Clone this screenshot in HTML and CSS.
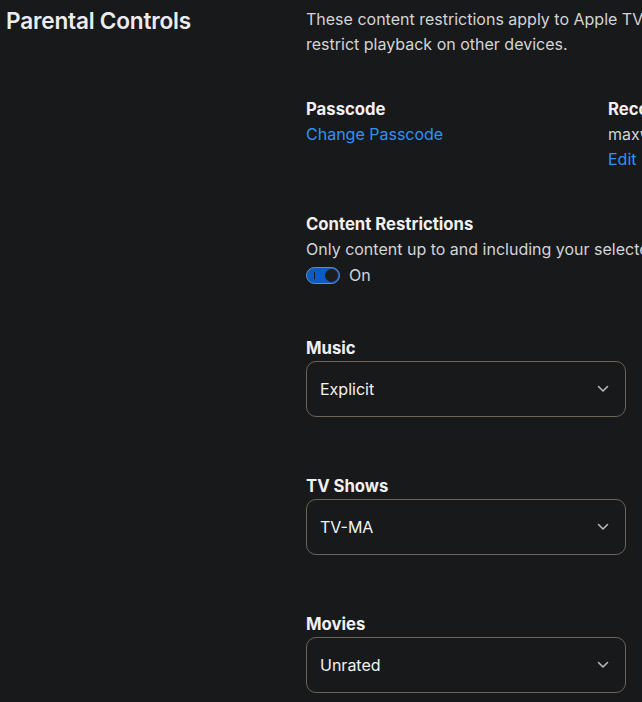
FILE: index.html
```html
<!DOCTYPE html>
<html lang="en">
<head>
<meta charset="utf-8">
<title>Parental Controls</title>
<link rel="stylesheet" href="styles.css">
</head>
<body>
<div class="page">
  <aside class="side">
    <h1 class="title">Parental Controls</h1>
  </aside>
  <main class="main">
    <p class="desc">These content restrictions apply to Apple TV app on this device. Use Screen Time to<br>restrict playback on other devices.</p>

    <div class="info-row">
      <div class="info-col passcode">
        <div class="label">Passcode</div>
        <a class="link" href="#">Change Passcode</a>
      </div>
      <div class="info-col">
        <div class="label">Recovery Email</div>
        <div class="text">maxwell@example.com</div>
        <a class="link" href="#">Edit</a>
      </div>
    </div>

    <div class="restrictions">
      <div class="label">Content Restrictions</div>
      <div class="text">Only content up to and including your selected ratings will be allowed.</div>
      <div class="toggle-row">
        <span class="toggle"><span class="toggle-mark"></span><span class="toggle-knob"></span></span>
        <span class="text">On</span>
      </div>
    </div>

    <div class="field first">
      <div class="label">Music</div>
      <div class="select"><span>Explicit</span><svg class="chev" viewBox="0 0 12 8" width="12" height="8"><path d="M1.5 1.5 L6 6 L10.5 1.5" fill="none" stroke="#b8b8b8" stroke-width="1.6" stroke-linecap="round" stroke-linejoin="round"/></svg></div>
    </div>
    <div class="field">
      <div class="label">TV Shows</div>
      <div class="select"><span>TV-MA</span><svg class="chev" viewBox="0 0 12 8" width="12" height="8"><path d="M1.5 1.5 L6 6 L10.5 1.5" fill="none" stroke="#b8b8b8" stroke-width="1.6" stroke-linecap="round" stroke-linejoin="round"/></svg></div>
    </div>
    <div class="field">
      <div class="label">Movies</div>
      <div class="select"><span>Unrated</span><svg class="chev" viewBox="0 0 12 8" width="12" height="8"><path d="M1.5 1.5 L6 6 L10.5 1.5" fill="none" stroke="#b8b8b8" stroke-width="1.6" stroke-linecap="round" stroke-linejoin="round"/></svg></div>
    </div>
  </main>
</div>
</body>
</html>
```
FILE: styles.css
```css
html, body {
  margin: 0;
  padding: 0;
  background: #18191b;
  overflow: hidden;
}
body {
  font-family: Inter, "Noto Sans", sans-serif;
  font-size: 16px;
  line-height: 25px;
  color: #d4d4d6;
  width: 642px;
  height: 702px;
}
.page {
  display: grid;
  grid-template-columns: 300px 700px;
  padding-left: 6px;
}
.title {
  margin: 6px 0 0 0;
  font-size: 22.6px;
  line-height: 30px;
  font-weight: 600;
  color: #ececee;
  letter-spacing: -0.2px;
}
.main {
  padding-top: 7px;
}
.desc {
  margin: 0;
  white-space: nowrap;
}
.info-row {
  display: flex;
  margin-top: 40px;
}
.info-col.passcode {
  width: 302px;
}
.info-col {
  display: flex;
  flex-direction: column;
  white-space: nowrap;
}
.label {
  font-weight: 700;
  font-size: 16.7px;
  color: #f0f0f2;
  white-space: nowrap;
}
.text {
  white-space: nowrap;
}
.link {
  color: #2e93f5;
  text-decoration: none;
  white-space: nowrap;
}
.restrictions {
  margin-top: 40px;
}
.toggle-row {
  display: flex;
  align-items: center;
  gap: 9px;
  margin-top: 5px;
  height: 17px;
}
.toggle {
  position: relative;
  width: 32px;
  height: 15px;
  border-radius: 9px;
  background: #0a5bc4;
  border: 1px solid #6f8bb0;
  box-sizing: content-box;
}
.toggle-mark {
  position: absolute;
  left: 7px;
  top: 4px;
  width: 1px;
  height: 7px;
  background: #1b1c1f;
}
.toggle-knob {
  position: absolute;
  right: 1px;
  top: 1px;
  width: 13px;
  height: 13px;
  border-radius: 50%;
  background: #1c1d20;
}
.field {
  margin-top: 57px;
  width: 320px;
}
.field.first {
  margin-top: 52px;
}
.select {
  display: flex;
  align-items: center;
  justify-content: space-between;
  height: 56px;
  box-sizing: border-box;
  border: 1px solid #6b6457;
  border-radius: 10px;
  padding: 0 16px 0 13px;
  color: #f2f2f4;
}
.chev {
  display: block;
}
```
